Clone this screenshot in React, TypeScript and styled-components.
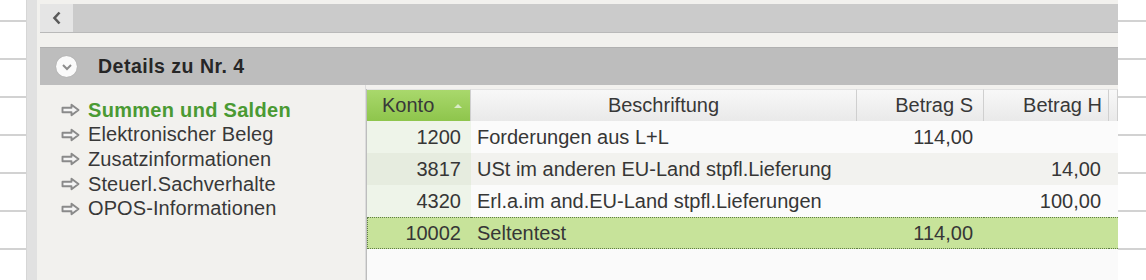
import React from "react"
import styled, { createGlobalStyle } from "styled-components"

const GlobalStyle = createGlobalStyle`
  html, body {
    margin: 0;
    padding: 0;
    height: 280px;
    overflow: hidden;
  }
  body {
    font-family: "Liberation Sans", Arial, sans-serif;
    background-color: #ffffff;
    background-image: repeating-linear-gradient(
      to bottom,
      transparent 0px,
      transparent 20px,
      #d2d2d2 20px,
      #d2d2d2 22px,
      transparent 22px,
      transparent 38px
    );
  }
`

type Row = {
  konto: string
  text: string
  soll?: string
  haben?: string
  selected?: boolean
}

const rows: Row[] = [
  { konto: "1200", text: "Forderungen aus L+L", soll: "114,00" },
  { konto: "3817", text: "USt im anderen EU-Land stpfl.Lieferung", haben: "14,00" },
  { konto: "4320", text: "Erl.a.im and.EU-Land stpfl.Lieferungen", haben: "100,00" },
  { konto: "10002", text: "Seltentest", soll: "114,00", selected: true },
]

const navItems = [
  { label: "Summen und Salden", active: true },
  { label: "Elektronischer Beleg" },
  { label: "Zusatzinformationen" },
  { label: "Steuerl.Sachverhalte" },
  { label: "OPOS-Informationen" },
]

const Page = styled.div`
  display: flex;
  height: 280px;
`

const Gutter = styled.div<{ $width: number }>`
  width: ${(p) => p.$width}px;
  flex-shrink: 0;
`

const Frame = styled.div`
  width: 1092px;
  flex-shrink: 0;
  display: flex;
  background: #f2f1ee;
  overflow: hidden;
`

const Strip = styled.div`
  width: 10px;
  background: #e1e1e1;
  border-left: 1px solid #d6d6d6;
  margin-right: 3px;
`

const Main = styled.div`
  flex: 1;
  display: flex;
  flex-direction: column;
  padding-top: 4px;
  min-width: 0;
`

const ScrollBar = styled.div`
  height: 28px;
  display: flex;
  background: #cbcbcb;
  border-bottom: 1px solid #b9b9b9;
`

const ScrollButton = styled.div`
  width: 33px;
  background: #e5e5e5;
  display: flex;
  align-items: center;
  justify-content: center;
`

const HeaderBar = styled.div`
  margin-top: 14px;
  height: 38px;
  background: #bdbdbd;
  border-top: 1px solid #b1b1b1;
  box-sizing: border-box;
  display: flex;
  align-items: center;
  padding-left: 16px;
  gap: 21px;
`

const Toggle = styled.div`
  width: 21px;
  height: 21px;
  border-radius: 50%;
  background: #fafafa;
  box-shadow: 0 0 1px rgba(0, 0, 0, 0.25);
  display: flex;
  align-items: center;
  justify-content: center;
`

const HeaderTitle = styled.span`
  font-size: 19.5px;
  font-weight: bold;
  color: #262626;
  letter-spacing: 0.5px;
`

const Content = styled.div`
  flex: 1;
  display: flex;
  min-height: 0;
`

const Nav = styled.ul`
  width: 326px;
  flex-shrink: 0;
  margin: 0;
  padding: 13px 0 0 21px;
  box-sizing: border-box;
  list-style: none;
  border-right: 1px solid #dcdcdc;
`

const NavItem = styled.li<{ $active?: boolean }>`
  display: flex;
  align-items: center;
  gap: 8px;
  height: 24.6px;
  font-size: 20px;
  font-weight: ${(p) => (p.$active ? "bold" : "normal")};
  color: ${(p) => (p.$active ? "#4a9a33" : "#383838")};
  letter-spacing: ${(p) => (p.$active ? "0.3px" : "0.1px")};
  white-space: nowrap;
`

const Table = styled.div`
  flex: 1;
  min-width: 0;
  overflow: hidden;
  margin-top: 4px;
  background: #fafafa;
  border-left: 1px solid #bdbdbd;
  display: grid;
  grid-template-columns: 104px 386px 127px 125px minmax(0, 1fr);
  grid-auto-rows: 32px;
  align-content: start;
  font-size: 20px;
  color: #363636;
`

const HeadCell = styled.div<{ $align?: string; $sorted?: boolean; $pr?: number }>`
  height: 33px;
  display: flex;
  align-items: center;
  justify-content: ${(p) => p.$align || "center"};
  padding: 0 ${(p) => p.$pr ?? 0}px 0 ${(p) => (p.$sorted ? 15 : 0)}px;
  box-sizing: border-box;
  border-right: 1px solid #cfcfcf;
  border-bottom: 1px solid #c6c6c6;
  border-top: 1px solid #e2e2e2;
  background: ${(p) =>
    p.$sorted
      ? "linear-gradient(to bottom, #a9d86c, #8ec54c)"
      : "linear-gradient(to bottom, #f8f8f8, #e9e9e9)"};
  color: #383838;
  white-space: nowrap;
`

const SortArrow = styled.span`
  margin-left: auto;
  width: 0;
  height: 0;
  border-left: 4px solid transparent;
  border-right: 4px solid transparent;
  border-bottom: 4px solid #d9ebc6;
`

const RowBox = styled.div<{ $index: number; $selected?: boolean }>`
  display: contents;
  & > div {
    background: ${(p) =>
      p.$selected ? "#c7e39a" : p.$index % 2 === 1 ? "#f2f2ef" : "#fbfbfb"};
    ${(p) =>
      p.$selected &&
      `border-top: 1px dotted #5f7d45; border-bottom: 1px dotted #5f7d45;`}
  }
  & > div:first-child {
    ${(p) =>
      p.$selected
        ? "border-left: 1px dotted #5f7d45;"
        : `background: ${p.$index % 2 === 1 ? "#e6ecdf" : "#eef4e9"};`}
  }
`

const Cell = styled.div<{ $align?: string; $pr?: number }>`
  display: flex;
  align-items: center;
  justify-content: ${(p) => p.$align || "flex-start"};
  padding: 0 ${(p) => p.$pr ?? 0}px 0 6px;
  box-sizing: border-box;
  white-space: nowrap;
  overflow: hidden;
`

const Arrow = () => (
  <svg width="19" height="14" viewBox="0 0 19 14">
    <path
      d="M1.5 4.8 H10.5 V1.8 L17.5 7 L10.5 12.2 V9.2 H1.5 Z"
      fill="#f4f4f4"
      stroke="#8a8a8a"
      strokeWidth="1.9"
      strokeLinejoin="round"
    />
  </svg>
)

export default function App() {
  return (
    <>
      <GlobalStyle />
      <Page>
        <Gutter $width={26} />
        <Frame>
          <Strip />
          <Main>
            <ScrollBar>
              <ScrollButton>
                <svg width="10" height="14" viewBox="0 0 10 14">
                  <path
                    d="M7.5 1.5 L2.5 7 L7.5 12.5"
                    fill="none"
                    stroke="#5a5a5a"
                    strokeWidth="2.6"
                  />
                </svg>
              </ScrollButton>
            </ScrollBar>
            <HeaderBar>
              <Toggle>
                <svg width="12" height="8" viewBox="0 0 12 8">
                  <path
                    d="M2 2 L6 6 L10 2"
                    fill="none"
                    stroke="#8c8c8c"
                    strokeWidth="2"
                  />
                </svg>
              </Toggle>
              <HeaderTitle>Details zu Nr. 4</HeaderTitle>
            </HeaderBar>
            <Content>
              <Nav>
                {navItems.map((item) => (
                  <NavItem key={item.label} $active={item.active}>
                    <Arrow />
                    {item.label}
                  </NavItem>
                ))}
              </Nav>
              <Table>
                <HeadCell $sorted $align="flex-start" $pr={8}>
                  Konto
                  <SortArrow />
                </HeadCell>
                <HeadCell>Beschriftung</HeadCell>
                <HeadCell $align="flex-end" $pr={10}>
                  Betrag S
                </HeadCell>
                <HeadCell $align="flex-end" $pr={6}>
                  Betrag H
                </HeadCell>
                <HeadCell />
                {rows.map((r, i) => (
                  <RowBox key={r.konto} $index={i} $selected={r.selected}>
                    <Cell $align="flex-end" $pr={10}>
                      {r.konto}
                    </Cell>
                    <Cell>{r.text}</Cell>
                    <Cell $align="flex-end" $pr={11}>
                      {r.soll}
                    </Cell>
                    <Cell $align="flex-end" $pr={8}>
                      {r.haben}
                    </Cell>
                    <Cell />
                  </RowBox>
                ))}
              </Table>
            </Content>
          </Main>
        </Frame>
        <Gutter $width={28} />
      </Page>
    </>
  )
}
